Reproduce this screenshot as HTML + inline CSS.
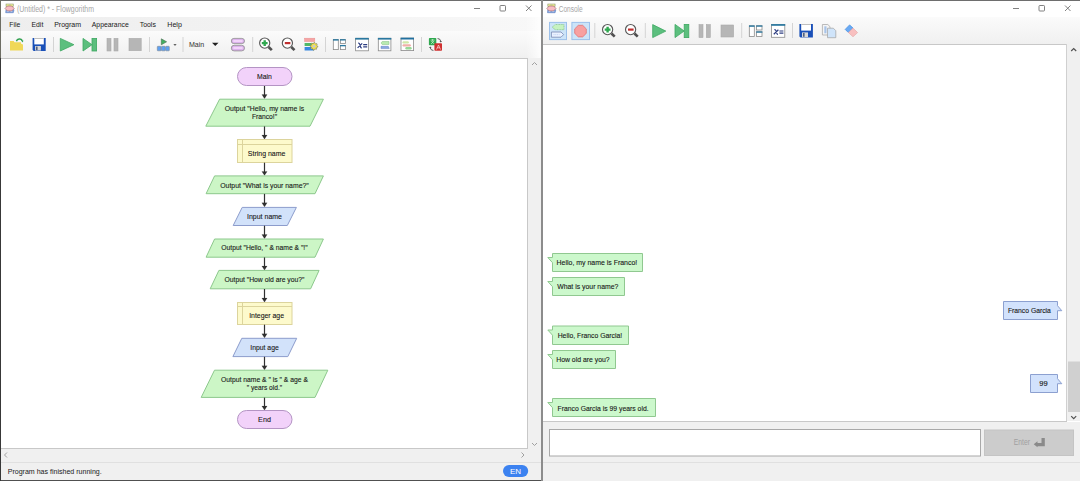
<!DOCTYPE html>
<html><head><meta charset="utf-8">
<style>
html,body{margin:0;padding:0;background:#fff;width:1080px;height:481px;overflow:hidden}
svg{display:block;font-family:"Liberation Sans",sans-serif}
</style></head>
<body>
<svg width="1080" height="481" viewBox="0 0 1080 481">
<defs>
<linearGradient id="tb" x1="0" y1="0" x2="0" y2="1">
<stop offset="0" stop-color="#fbfbfb"/><stop offset="1" stop-color="#f0f0f0"/>
</linearGradient>
<linearGradient id="mb" x1="0" y1="0" x2="1" y2="0"><stop offset="0" stop-color="#eeeeee"/><stop offset="0.45" stop-color="#f2f2f2"/><stop offset="1" stop-color="#f8f8f8"/></linearGradient>
<linearGradient id="fadeR" x1="0" y1="0" x2="1" y2="0"><stop offset="0" stop-color="#ffffff" stop-opacity="0"/><stop offset="1" stop-color="#ffffff" stop-opacity="0.85"/></linearGradient>
</defs>
<!-- ===== LEFT WINDOW ===== -->
<rect x="0" y="0" width="542" height="481" fill="#f0f0f0"/>
<rect x="0" y="1" width="541" height="16" fill="#ffffff"/>
<rect x="1" y="17" width="540" height="14" fill="url(#mb)"/>
<rect x="1" y="31" width="540" height="27" fill="url(#tb)"/>
<rect x="526" y="17" width="15" height="41" fill="url(#fadeR)"/>
<rect x="1" y="58" width="527" height="1" fill="#c8c8c8"/>
<rect x="1" y="59" width="526" height="389" fill="#ffffff"/>
<rect x="527" y="58" width="1" height="391" fill="#c8c8c8"/>
<rect x="1" y="448" width="527" height="1" fill="#c8c8c8"/>
<rect x="1" y="462" width="540" height="1" fill="#e0e0e0"/>
<rect x="0" y="480" width="542" height="1" fill="#505050"/>
<rect x="0" y="0" width="1080" height="1" fill="#6e6e6e"/>
<rect x="0" y="0" width="1" height="58" fill="#6e6e64"/><rect x="0" y="58" width="1" height="423" fill="#383838"/>
<rect x="541" y="0" width="2" height="481" fill="#8c8c8c"/>
<!-- title -->
<g transform="translate(0 0)">
<rect x="6" y="4" width="7.3" height="2.6" fill="#d4e4a0" stroke="#a09c78" stroke-width="0.6"/>
<circle cx="7.9" cy="5.3" r="0.9" fill="#f4f080"/><circle cx="11.5" cy="5.3" r="0.9" fill="#f4f080"/>
<path d="M6 9.8h8l-0.7 2.9h-7.6z" fill="#88aee8" stroke="#5a78b8" stroke-width="0.6"/>
<circle cx="8" cy="11.3" r="0.6" fill="#e8f0ff"/><circle cx="11.2" cy="11.3" r="0.6" fill="#e8f0ff"/>
<path d="M5 8.5l2.4-2.5h4.4l2.4 2.5l-2.4 2.4h-4.4z" fill="#f8bcc4" stroke="#9a6060" stroke-width="0.6"/>
</g>
<g font-size="8.3" fill="#a6a6a6">
<text x="17" y="11.5" textLength="77" lengthAdjust="spacingAndGlyphs">(Untitled) * - Flowgorithm</text>
</g>
<!-- window controls -->
<g stroke="#6a6a6a" stroke-width="0.85" fill="none">
<path d="M474 8.5h6"/>
<rect x="500" y="5.5" width="5.5" height="5.5" rx="0.8"/>
<path d="M526 5.5l5.5 5.5M531.5 5.5l-5.5 5.5"/>
</g>
<!-- menu -->
<g font-size="8" fill="#202020">
<text x="9.3" y="26.6" textLength="11" lengthAdjust="spacingAndGlyphs">File</text>
<text x="31.5" y="26.6" textLength="11.8" lengthAdjust="spacingAndGlyphs">Edit</text>
<text x="54.2" y="26.6" textLength="26.8" lengthAdjust="spacingAndGlyphs">Program</text>
<text x="91.8" y="26.6" textLength="36.9" lengthAdjust="spacingAndGlyphs">Appearance</text>
<text x="139.7" y="26.6" textLength="16.2" lengthAdjust="spacingAndGlyphs">Tools</text>
<text x="167.3" y="26.6" textLength="14.6" lengthAdjust="spacingAndGlyphs">Help</text>
</g>

<!-- ===== LEFT TOOLBAR ICONS ===== -->
<g id="ltools">
<!-- open folder -->
<path d="M10 41h3.7l0.8 1.2h6.6v1.6l1.9 0.6v6.2h-13z" fill="#f0d858"/>
<path d="M16.4 41.2a3.2 3 0 0 1 5.9 -0.6" stroke="#30a050" stroke-width="1.4" fill="none"/>
<path d="M20.8 40.2l2.6 0.2l-0.6 2.2z" fill="#30a050"/>
<!-- save -->
<path d="M32.6 38h13.1v13h-12l-1.1-1.1z" fill="#1a50b8"/>
<rect x="34.3" y="38" width="9.5" height="6.4" fill="#ffffff"/>
<rect x="34.3" y="38" width="9.5" height="0.9" fill="#b8b8b8"/>
<rect x="35.1" y="46" width="5.8" height="4.6" fill="#d8d8d8"/>
<rect x="36" y="46.6" width="1.6" height="3.6" fill="#506080"/>
<!-- sep -->
<rect x="53" y="37" width="1" height="15" fill="#d4d4d4"/>
<!-- play -->
<path d="M60.3 38.4L73.9 44.7L60.3 51z" fill="#5cbf7e" stroke="#3ea862" stroke-width="0.8"/>
<!-- step -->
<path d="M83 38.4L92 44.7L83 51z" fill="#5cbf7e" stroke="#3ea862" stroke-width="0.8"/>
<rect x="92" y="38.4" width="4.6" height="12.6" fill="#5cbf7e" stroke="#3ea862" stroke-width="0.8"/>
<!-- pause -->
<rect x="107" y="38.4" width="4" height="12.6" fill="#b6b6b6" stroke="#aaaaaa" stroke-width="0.6"/>
<rect x="114" y="38.4" width="4" height="12.6" fill="#b6b6b6" stroke="#aaaaaa" stroke-width="0.6"/>
<!-- stop -->
<rect x="129" y="38.4" width="12.2" height="12.3" fill="#b6b6b6" stroke="#aaaaaa" stroke-width="0.6"/>
<rect x="149" y="37" width="1" height="15" fill="#d4d4d4"/>
<!-- speed -->
<path d="M161.3 38.8L166.6 41.8L161.3 44.8z" fill="#40b060" stroke="#4a6a50" stroke-width="0.6"/>
<rect x="157.3" y="46.3" width="3.7" height="4.5" rx="0.6" fill="#5ea0f2" stroke="#808890" stroke-width="0.6"/>
<rect x="161.45" y="46.3" width="3.7" height="4.5" rx="0.6" fill="#5ea0f2" stroke="#808890" stroke-width="0.6"/>
<rect x="165.6" y="46.3" width="3.7" height="4.5" rx="0.6" fill="#5ea0f2" stroke="#808890" stroke-width="0.6"/>
<path d="M173.4 44.2h3.2l-1.6 1.6z" fill="#303030"/>
<rect x="182.5" y="37" width="1" height="15" fill="#d4d4d4"/>
<text x="188.9" y="47.1" font-size="8" fill="#333" textLength="15.3" lengthAdjust="spacingAndGlyphs">Main</text>
<path d="M212 42.8h6.5l-3.25 3.2z" fill="#202020"/>
<!-- pills -->
<rect x="231.3" y="38.4" width="13.2" height="5.2" rx="2.6" fill="#dcb2ec" stroke="#8e8e8e" stroke-width="0.8"/>
<rect x="231.3" y="45.3" width="13.2" height="5.6" rx="2.8" fill="#dcb2ec" stroke="#8e8e8e" stroke-width="0.8"/>
<rect x="233" y="40" width="9.8" height="2" rx="1" fill="#f2d4fa"/>
<rect x="233" y="47.1" width="9.8" height="2" rx="1" fill="#f2d4fa"/>
<rect x="252.2" y="37" width="1" height="15" fill="#d4d4d4"/>
<!-- zoom in -->
<circle cx="264.7" cy="43.1" r="5.1" fill="#ffffff" stroke="#5a5a5a" stroke-width="1.15"/>
<path d="M268.6 47l3.2 3.2" stroke="#505050" stroke-width="2.6"/>
<path d="M264.7 40.2v5.8M261.8 43.1h5.8" stroke="#30a850" stroke-width="2.4"/>
<!-- zoom out -->
<circle cx="287.4" cy="43.1" r="5.1" fill="#ffffff" stroke="#5a5a5a" stroke-width="1.15"/>
<path d="M291.3 47l3.2 3.2" stroke="#505050" stroke-width="2.6"/>
<path d="M284.8 43.1h5.6" stroke="#c03030" stroke-width="2.2"/>
<!-- layers -->
<rect x="304.6" y="38.2" width="10.2" height="3.3" fill="#f6a4a4" stroke="#e89090" stroke-width="0.5"/>
<rect x="304.6" y="43" width="10" height="3" fill="#50b868"/>
<rect x="304.6" y="47" width="9.5" height="3.5" fill="#3888e0"/>
<path d="M317.90 46.30 L317.83 47.06 L316.68 47.41 L316.41 47.91 L316.76 49.06 L316.17 49.54 L315.11 48.98 L314.57 49.14 L314.00 50.20 L313.24 50.13 L312.89 48.98 L312.39 48.71 L311.24 49.06 L310.76 48.47 L311.32 47.41 L311.16 46.87 L310.10 46.30 L310.17 45.54 L311.32 45.19 L311.59 44.69 L311.24 43.54 L311.83 43.06 L312.89 43.62 L313.43 43.46 L314.00 42.40 L314.76 42.47 L315.11 43.62 L315.61 43.89 L316.76 43.54 L317.24 44.13 L316.68 45.19 L316.84 45.73Z" fill="#f0e050" stroke="#7a7a60" stroke-width="0.6"/>
<circle cx="314" cy="46.3" r="1.3" fill="#c8c8d0"/>
<rect x="325" y="37" width="1" height="15" fill="#d4d4d4"/>
<!-- layout -->
<rect x="333.3" y="39.6" width="5" height="10" fill="#fff" stroke="#8a8a8a" stroke-width="0.8"/>
<rect x="333" y="39.2" width="5.6" height="1.4" fill="#2a78a0"/>
<rect x="340.4" y="39.6" width="5" height="3.8" fill="#fff" stroke="#8a8a8a" stroke-width="0.8"/>
<rect x="340" y="39.2" width="5.6" height="1.3" fill="#2a78a0"/>
<rect x="340.4" y="45.4" width="5" height="4.2" fill="#fff" stroke="#8a8a8a" stroke-width="0.8"/>
<rect x="340" y="45" width="5.6" height="1.3" fill="#2a78a0"/>
<!-- x= -->
<rect x="355.6" y="38.3" width="12.8" height="12.5" fill="#fff" stroke="#8a8a8a" stroke-width="0.8"/>
<rect x="355.2" y="37.9" width="13.6" height="1.7" fill="#2a78a0"/>
<path d="M358.2 43.2q1.2-0.2 1.6 1.2l0.8 2.6q0.3 1 1.2 0.9M362.2 43.4l-4.6 4.5" stroke="#2c3c80" stroke-width="1.2" fill="none"/>
<path d="M363.2 44.6h4M363.2 46.8h4" stroke="#2c3c80" stroke-width="1.2"/>
<!-- console -->
<rect x="378.3" y="38.3" width="12.6" height="12.5" fill="#fff" stroke="#8a8a8a" stroke-width="0.8"/>
<rect x="377.9" y="37.9" width="13.4" height="1.7" fill="#2a78a0"/>
<path d="M381 43l1.2-1.5h6.8v3h-6.8z" fill="#b8eab0" stroke="#80c080" stroke-width="0.5"/>
<path d="M381 46.3h7.3l0.9 2.3h-8.2z" fill="#8aa8e0" stroke="#6080c0" stroke-width="0.5"/>
<!-- next -->
<rect x="401" y="38.1" width="12.6" height="12.5" fill="#fff" stroke="#8a8a8a" stroke-width="0.8"/>
<rect x="400.6" y="37.7" width="13.4" height="1.8" fill="#2070a0"/>
<path d="M402.2 42.4l1-1.2h5l1 1.2l-1 1.2h-5z" fill="#d0e8a8"/>
<path d="M402.2 45.4l1-1.2h7l1 1.2l-1 1.2h-7z" fill="#f0b0a8"/>
<path d="M405 48.2l1-1.2h5l1 1.2l-1 1.2h-5z" fill="#98d898"/>
<rect x="421" y="37" width="1" height="15" fill="#d4d4d4"/>
<!-- translate -->
<rect x="428.9" y="37.9" width="7.4" height="7.4" rx="0.8" fill="#30a850"/>
<path d="M430.8 40h3.6M432.6 39v2.5M431 44l3.2-3.2M434.2 44l-3.2-3.2" stroke="#e0ffe0" stroke-width="0.6"/>
<rect x="434.4" y="43.3" width="7.6" height="7.4" rx="0.8" fill="#d03030"/>
<path d="M436.5 49.5l2-4.5l2 4.5M437.3 47.8h2.4" stroke="#ffe0e0" stroke-width="0.7" fill="none"/>
<path d="M437.6 38.5q2.9 0.3 3.1 2.6" stroke="#505050" stroke-width="0.9" fill="none"/>
<path d="M439.5 40.9h2.5l-1.25 1.7z" fill="#505050"/>
<path d="M433.4 50.5q-2.9-0.3-3.1-2.6" stroke="#505050" stroke-width="0.9" fill="none"/>
<path d="M431.5 48.1h-2.5l1.25-1.7z" fill="#505050"/>
</g>

<!-- canvas flowchart -->
<g id="flow" font-size="8.1" fill="#181818" stroke="#181818" stroke-width="0.12" text-anchor="middle">
<rect x="237.5" y="67.5" width="54.5" height="18" rx="9.0" fill="#f2d2fa" stroke="#b494c4" stroke-width="1"/>
<text x="264.5" y="78.9" textLength="14.8" lengthAdjust="spacingAndGlyphs">Main</text>
<path d="M264.5 86V95.3" stroke="#303030" stroke-width="1.2" fill="none"/>
<path d="M261.8 94.6L264.5 98.8L267.2 94.6z" fill="#303030"/>
<path d="M219.6 99.2H323.4L310 126.2H205.8Z" fill="#ccf6c6" stroke="#8cc88c" stroke-width="1"/>
<text x="264.5" y="110.8" textLength="79.5" lengthAdjust="spacingAndGlyphs">Output "Hello, my name is</text>
<text x="264.5" y="118.7" textLength="25.2" lengthAdjust="spacingAndGlyphs">Franco!"</text>
<path d="M264.5 126.4V135.7" stroke="#303030" stroke-width="1.2" fill="none"/>
<path d="M261.8 135.0L264.5 139.2L267.2 135.0z" fill="#303030"/>
<rect x="237.5" y="139.5" width="54.5" height="23" fill="#fdfacc" stroke="#dcd49c" stroke-width="1"/>
<path d="M242.5 139.5V162.5M237.5 144.5H292" stroke="#dcd49c" stroke-width="1" fill="none"/>
<text x="266.6" y="155.5" textLength="37.5" lengthAdjust="spacingAndGlyphs">String name</text>
<path d="M264.5 162.7V172.1" stroke="#303030" stroke-width="1.2" fill="none"/>
<path d="M261.8 171.4L264.5 175.6L267.2 171.4z" fill="#303030"/>
<path d="M214.6 175.9H323.4L315 193.7H206.1Z" fill="#ccf6c6" stroke="#8cc88c" stroke-width="1"/>
<text x="264.5" y="187.5" textLength="88.5" lengthAdjust="spacingAndGlyphs">Output "What is your name?"</text>
<path d="M264.5 193.9V203.5" stroke="#303030" stroke-width="1.2" fill="none"/>
<path d="M261.8 202.8L264.5 207L267.2 202.8z" fill="#303030"/>
<path d="M242.2 207.4H296.4L287.3 225.5H233.2Z" fill="#d2e2fa" stroke="#8c9ccc" stroke-width="1"/>
<text x="264.5" y="218.8" textLength="35" lengthAdjust="spacingAndGlyphs">Input name</text>
<path d="M264.5 225.7V235.2" stroke="#303030" stroke-width="1.2" fill="none"/>
<path d="M261.8 234.5L264.5 238.7L267.2 234.5z" fill="#303030"/>
<path d="M214.6 239H323.4L315 257.2H206.1Z" fill="#ccf6c6" stroke="#8cc88c" stroke-width="1"/>
<text x="264.5" y="250.4" textLength="86.3" lengthAdjust="spacingAndGlyphs">Output "Hello, " &amp; name &amp; "!"</text>
<path d="M264.5 257.4V266.7" stroke="#303030" stroke-width="1.2" fill="none"/>
<path d="M261.8 266.0L264.5 270.2L267.2 266.0z" fill="#303030"/>
<path d="M218.9 270.4H319.1L310.6 288.8H210.2Z" fill="#ccf6c6" stroke="#8cc88c" stroke-width="1"/>
<text x="264.5" y="282" textLength="80.1" lengthAdjust="spacingAndGlyphs">Output "How old are you?"</text>
<path d="M264.5 289V298.7" stroke="#303030" stroke-width="1.2" fill="none"/>
<path d="M261.8 298.0L264.5 302.2L267.2 298.0z" fill="#303030"/>
<rect x="237.5" y="302.5" width="54.5" height="22" fill="#fdfacc" stroke="#dcd49c" stroke-width="1"/>
<path d="M242.5 302.5V324.5M237.5 306.5H292" stroke="#dcd49c" stroke-width="1" fill="none"/>
<text x="266.6" y="318" textLength="34.9" lengthAdjust="spacingAndGlyphs">Integer age</text>
<path d="M264.5 324.7V334.5" stroke="#303030" stroke-width="1.2" fill="none"/>
<path d="M261.8 333.8L264.5 338L267.2 333.8z" fill="#303030"/>
<path d="M241.8 338.3H296.7L287.8 356.6H232.9Z" fill="#d2e2fa" stroke="#8c9ccc" stroke-width="1"/>
<text x="264.5" y="350" textLength="28.5" lengthAdjust="spacingAndGlyphs">Input age</text>
<path d="M264.5 356.8V366.5" stroke="#303030" stroke-width="1.2" fill="none"/>
<path d="M261.8 365.8L264.5 370L267.2 365.8z" fill="#303030"/>
<path d="M214.5 370.2H327.8L315 397.4H201.2Z" fill="#ccf6c6" stroke="#8cc88c" stroke-width="1"/>
<text x="264.5" y="382.3" textLength="86.9" lengthAdjust="spacingAndGlyphs">Output name &amp; " is " &amp; age &amp;</text>
<text x="264.5" y="390.1" textLength="35.4" lengthAdjust="spacingAndGlyphs">" years old."</text>
<path d="M264.5 397.6V406.7" stroke="#303030" stroke-width="1.2" fill="none"/>
<path d="M261.8 406.0L264.5 410.2L267.2 406.0z" fill="#303030"/>
<rect x="237.5" y="410.5" width="54.5" height="18" rx="9.0" fill="#f2d2fa" stroke="#b494c4" stroke-width="1"/>
<text x="264.5" y="422" textLength="12.8" lengthAdjust="spacingAndGlyphs">End</text>
</g>

<!-- scrollbar arrows left -->
<g stroke="#a0a0a0" stroke-width="1" fill="none">
<path d="M532 65l2.5-2.5l2.5 2.5"/>
<path d="M532 443l2.5 2.5l2.5-2.5"/>
<path d="M7 452.5l-2.5 2.5l2.5 2.5"/>
<path d="M521.5 452.5l2.5 2.5l-2.5 2.5"/>
</g>
<!-- status -->
<text x="7.7" y="474.2" font-size="8" fill="#202020" textLength="94" lengthAdjust="spacingAndGlyphs">Program has finished running.</text>
<rect x="503" y="465" width="25.2" height="12" rx="6" fill="#3c82f0"/>
<text x="515.6" y="474" font-size="8" fill="#ffffff" text-anchor="middle">EN</text>

<!-- ===== RIGHT WINDOW ===== -->
<rect x="543" y="1" width="537" height="16" fill="#ffffff"/>
<rect x="543" y="17" width="537" height="27" fill="url(#tb)"/>
<rect x="543" y="44" width="524" height="1" fill="#c8c8c8"/>
<rect x="543" y="45" width="523" height="376" fill="#ffffff"/>
<rect x="1066" y="44" width="1" height="378" fill="#d0d0d0"/>
<rect x="1067" y="44" width="13" height="377" fill="#f0f0f0"/>
<rect x="1068" y="361.5" width="12" height="50.5" fill="#d0d0d0"/>
<rect x="543" y="421" width="524" height="1" fill="#c8c8c8"/>
<rect x="543" y="422" width="537" height="40" fill="#f0f0f0"/>
<rect x="543" y="462" width="537" height="1" fill="#e0e0e0"/>
<rect x="543" y="463" width="537" height="18" fill="#f0f0f0"/>
<g stroke="#505050" stroke-width="1.2" fill="none">
<path d="M1071.2 51l2.5-2.5l2.5 2.5"/>
<path d="M1071.2 416.2l2.5 2.5l2.5-2.5"/>
</g>
<g transform="translate(541.8 0)">
<rect x="6" y="4" width="7.3" height="2.6" fill="#d4e4a0" stroke="#a09c78" stroke-width="0.6"/>
<circle cx="7.9" cy="5.3" r="0.9" fill="#f4f080"/><circle cx="11.5" cy="5.3" r="0.9" fill="#f4f080"/>
<path d="M6 9.8h8l-0.7 2.9h-7.6z" fill="#88aee8" stroke="#5a78b8" stroke-width="0.6"/>
<circle cx="8" cy="11.3" r="0.6" fill="#e8f0ff"/><circle cx="11.2" cy="11.3" r="0.6" fill="#e8f0ff"/>
<path d="M5 8.5l2.4-2.5h4.4l2.4 2.5l-2.4 2.4h-4.4z" fill="#f8bcc4" stroke="#9a6060" stroke-width="0.6"/>
</g>
<text x="558.7" y="11.5" font-size="8.3" fill="#a6a6a6" textLength="24" lengthAdjust="spacingAndGlyphs">Console</text>
<g stroke="#6a6a6a" stroke-width="0.85" fill="none">
<path d="M1013 8.5h6"/>
<rect x="1039" y="5.5" width="5.5" height="5.5" rx="0.8"/>
<path d="M1065 5.5l5.5 5.5M1070.5 5.5l-5.5 5.5"/>
</g>
<!-- ===== RIGHT TOOLBAR ICONS ===== -->
<g id="rtools">
<rect x="549.5" y="22.4" width="17" height="17.2" fill="#cce4f8" stroke="#9cc0ea" stroke-width="1"/>
<path d="M552.2 27.2l3-2.7h8.8v5.2h-8.8z" fill="#c6f2c0" stroke="#70b870" stroke-width="0.6" stroke-dasharray="1 0.6"/>
<path d="M551.4 32h9.6l2.6 2.6l-2.6 2.6h-9.6z" fill="#eaf2ff" stroke="#6878a8" stroke-width="0.7"/>
<path d="M553.5 34.6h6" stroke="#a8c0e8" stroke-width="0.6" stroke-dasharray="1 0.8"/>
<rect x="571.9" y="22.4" width="17.6" height="17.2" fill="#cce4f8" stroke="#9cc0ea" stroke-width="1"/>
<path d="M578.3 25.3h4.4l3.6 3.6v4.4l-3.6 3.6h-4.4l-3.6-3.6v-4.4z" fill="#f8a0a0" stroke="#e06a6a" stroke-width="0.7"/>
<rect x="594.3" y="23" width="1" height="15" fill="#d4d4d4"/>
<!-- zoom in -->
<circle cx="607.6" cy="29.6" r="5.1" fill="#ffffff" stroke="#5a5a5a" stroke-width="1.15"/>
<path d="M611.5 33.5l3.2 3.2" stroke="#505050" stroke-width="2.6"/>
<path d="M607.6 26.7v5.8M604.7 29.6h5.8" stroke="#30a850" stroke-width="2.4"/>
<!-- zoom out -->
<circle cx="630.6" cy="29.6" r="5.1" fill="#ffffff" stroke="#5a5a5a" stroke-width="1.15"/>
<path d="M634.5 33.5l3.2 3.2" stroke="#505050" stroke-width="2.6"/>
<path d="M628 29.6h5.6" stroke="#c03030" stroke-width="2.2"/>
<rect x="644.8" y="23" width="1" height="15" fill="#d4d4d4"/>
<!-- play -->
<path d="M652.7 24.6L665.8 31.1L652.7 37.6z" fill="#5cbf7e" stroke="#3ea862" stroke-width="0.8"/>
<path d="M675 24.4L684.2 31L675 37.6z" fill="#5cbf7e" stroke="#3ea862" stroke-width="0.8"/>
<rect x="684.2" y="24.4" width="4.6" height="13.2" fill="#5cbf7e" stroke="#3ea862" stroke-width="0.8"/>
<rect x="699" y="24.6" width="4" height="13" fill="#b6b6b6" stroke="#aaaaaa" stroke-width="0.6"/>
<rect x="706.3" y="24.6" width="4" height="13" fill="#b6b6b6" stroke="#aaaaaa" stroke-width="0.6"/>
<rect x="721" y="25" width="12.6" height="12" fill="#b6b6b6" stroke="#aaaaaa" stroke-width="0.6"/>
<rect x="741.2" y="23" width="1" height="15" fill="#d4d4d4"/>
<!-- layout -->
<rect x="749.3" y="25.8" width="5" height="10.6" fill="#fff" stroke="#8a8a8a" stroke-width="0.8"/>
<rect x="749" y="25.4" width="5.6" height="1.4" fill="#2a78a0"/>
<rect x="756.6" y="25.8" width="5.4" height="4.2" fill="#fff" stroke="#8a8a8a" stroke-width="0.8"/>
<rect x="756.2" y="25.4" width="6.2" height="1.3" fill="#2a78a0"/>
<rect x="756.6" y="31.8" width="5.4" height="4.6" fill="#fff" stroke="#8a8a8a" stroke-width="0.8"/>
<rect x="756.2" y="31.4" width="6.2" height="1.3" fill="#2a78a0"/>
<!-- x= -->
<rect x="771.6" y="24.5" width="13.2" height="12.8" fill="#fff" stroke="#8a8a8a" stroke-width="0.8"/>
<rect x="771.2" y="24.1" width="14" height="1.7" fill="#2a78a0"/>
<g transform="translate(416.2 -13.6)"><path d="M358.2 43.2q1.2-0.2 1.6 1.2l0.8 2.6q0.3 1 1.2 0.9M362.2 43.4l-4.6 4.5" stroke="#2c3c80" stroke-width="1.2" fill="none"/>
<path d="M363.2 44.6h4M363.2 46.8h4" stroke="#2c3c80" stroke-width="1.2"/></g>
<rect x="792" y="23" width="1" height="15" fill="#d4d4d4"/>
<!-- save -->
<path d="M799.4 24h13.5v13.6h-12.4l-1.1-1.1z" fill="#1a50b8"/>
<rect x="801.2" y="24" width="9.8" height="6.6" fill="#ffffff"/>
<rect x="801.2" y="24" width="9.8" height="0.9" fill="#b8b8b8"/>
<rect x="802" y="32.4" width="6" height="4.8" fill="#d8d8d8"/>
<rect x="803" y="33" width="1.6" height="3.8" fill="#506080"/>
<!-- copy -->
<path d="M822.4 24.5h5.4l2.2 2.2v8.3h-7.6z" fill="#f4f4f4" stroke="#a0a0a0" stroke-width="0.7"/>
<rect x="824.3" y="26.3" width="2.2" height="7" fill="#a8c4e8"/>
<path d="M827.5 28.2h5.8l2.5 2.5v7h-8.3z" fill="#cfe4fa" stroke="#a0a0a0" stroke-width="0.7"/>
<!-- eraser -->
<path d="M849.6 24.9L853 28.1L848.4 32.6L845.2 29.4Z" fill="#6aaaf4" stroke="#3a86e0" stroke-width="0.7"/>
<path d="M853 28.1L857.6 32.6L853 36.8L848.4 32.6Z" fill="#f8c0c0" stroke="#e4a4a4" stroke-width="0.6"/>
</g>

<!-- input -->
<rect x="549.5" y="429.5" width="431" height="26.5" fill="#ffffff" stroke="#a8a8a8"/>
<rect x="984.5" y="430" width="89" height="25.5" fill="#cccccc" stroke="#c4c4c4"/>
<text x="1013.8" y="445" font-size="8.5" fill="#a0a0a0" textLength="16.2" lengthAdjust="spacingAndGlyphs">Enter</text>
<path d="M1041.5 438h3.3v8.2h-7.3v1l-3.8-3l3.8-3v1.7h4z" fill="#8a8a8a"/>

<!-- console bubbles -->
<g id="bubbles" font-size="8.1" fill="#181818" stroke="#181818" stroke-width="0.12">
<path d="M552.5 253.5H642.5V271.5H552.5V262.7L547.8 257.5H552.5Z" fill="#ccf8cc" stroke="#90c890" stroke-width="1"/>
<text x="556.6" y="265.2" textLength="80.6" lengthAdjust="spacingAndGlyphs">Hello, my name is Franco!</text>
<path d="M552.5 277.5H624.5V295.5H552.5V286.7L547.8 281.5H552.5Z" fill="#ccf8cc" stroke="#90c890" stroke-width="1"/>
<text x="557.2" y="289.2" textLength="61.2" lengthAdjust="spacingAndGlyphs">What is your name?</text>
<path d="M1003.5 301.5H1057.5V305.7L1061.8 310.7H1057.5V319.5H1003.5Z" fill="#d2e2fc" stroke="#8ca0d0" stroke-width="1"/>
<text x="1007.9" y="313" text-anchor="start" textLength="43" lengthAdjust="spacingAndGlyphs">Franco Garcia</text>
<path d="M552.5 326H628.5V344.5H552.5V335.2L547.8 330H552.5Z" fill="#ccf8cc" stroke="#90c890" stroke-width="1"/>
<text x="557.7" y="338" textLength="64.5" lengthAdjust="spacingAndGlyphs">Hello, Franco Garcia!</text>
<path d="M552.5 350.5H615.5V368.5H552.5V359.7L547.8 354.5H552.5Z" fill="#ccf8cc" stroke="#90c890" stroke-width="1"/>
<text x="556.2" y="362" textLength="53.5" lengthAdjust="spacingAndGlyphs">How old are you?</text>
<path d="M1030.5 374.5H1057.5V378.7L1061.8 383.7H1057.5V392.5H1030.5Z" fill="#d2e2fc" stroke="#8ca0d0" stroke-width="1"/>
<text x="1043.4" y="386.2" text-anchor="middle" textLength="8.4" lengthAdjust="spacingAndGlyphs">99</text>
<path d="M552.5 398.5H655.5V416.5H552.5V407.7L547.8 402.5H552.5Z" fill="#ccf8cc" stroke="#90c890" stroke-width="1"/>
<text x="557.6" y="410.6" textLength="91" lengthAdjust="spacingAndGlyphs">Franco Garcia is 99 years old.</text>
</g>
</svg>
</body></html>
